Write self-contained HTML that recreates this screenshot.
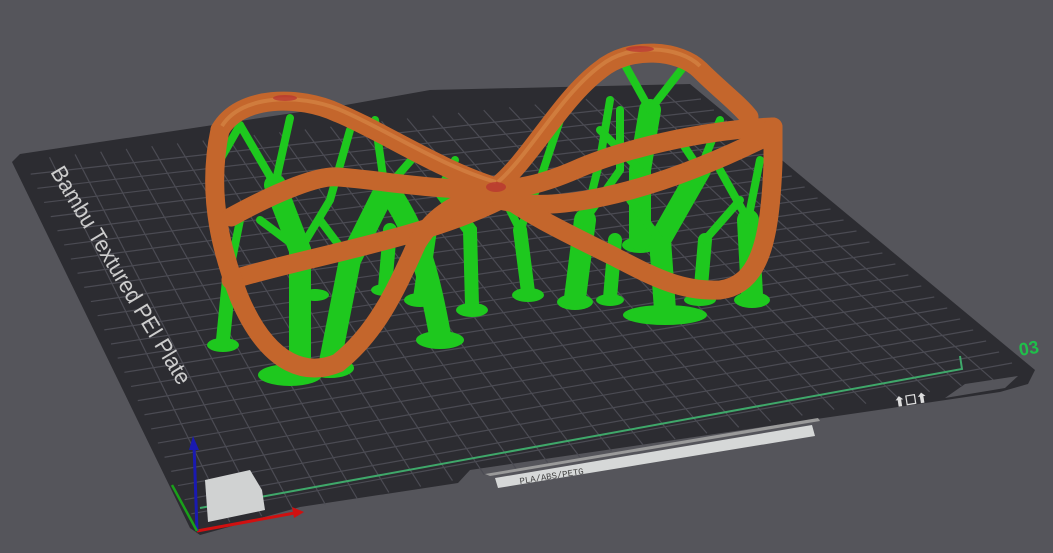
<!DOCTYPE html>
<html><head><meta charset="utf-8"><style>
html,body{margin:0;padding:0;width:1053px;height:553px;overflow:hidden;background:#55555b}
svg{display:block}
</style></head><body>
<svg id="s" width="1053" height="553" viewBox="0 0 1053 553" xmlns="http://www.w3.org/2000/svg">
<polygon points="12,162 20,154 340,106 430,90 690,84 1035,370 1028,384 1000,392 470,470 458,483 300,507 200,535 190,528" fill="#2c2c31"/>
<g id="grid" stroke="#4b4b53" stroke-width="1.2" fill="none"></g>
<polyline points="200,508 962,369 960,356" fill="none" stroke="#3fa86a" stroke-width="2"/>
<polygon points="495,478 498,488 815,436 812,425" fill="#d6d8d8"/>
<polygon points="485,474 490,476 820,421 818,418" fill="#9a9a9a"/>
<text x="895" y="407" font-family="Liberation Sans,sans-serif" font-size="13" font-weight="bold" fill="#ddd" transform="rotate(-9 895 407)">⬆☐⬆</text>
<text x="520" y="484" font-family="Liberation Mono,monospace" font-size="9" fill="#444" transform="rotate(-9 520 484)">PLA/ABS/PETG</text>
<polygon points="945,398 1005,388 1018,376 965,384" fill="#55555b"/>
<text x="50" y="172" font-family="Liberation Sans Narrow,Liberation Sans,sans-serif" font-size="23" fill="#cdcdcd" transform="rotate(59 50 172)" textLength="250" lengthAdjust="spacingAndGlyphs">Bambu Textured PEI Plate</text>
<text x="1020" y="356" font-family="Liberation Sans,sans-serif" font-size="18" font-weight="bold" fill="#1fbf4a" transform="rotate(-10 1020 356)">03</text>
<!-- axes -->
<polygon points="205,480 250,470 262,490 265,510 208,522" fill="#d0d2d2"/>
<line x1="197" y1="531" x2="300" y2="512" stroke="#d01010" stroke-width="3"/>
<polygon points="292,507 304,512 294,518" fill="#d01010"/>
<line x1="197" y1="531" x2="194" y2="445" stroke="#1a1ab0" stroke-width="3"/>
<polygon points="189,450 193,436 199,450" fill="#1a1ab0"/>
<line x1="197" y1="531" x2="172" y2="485" stroke="#1aa01a" stroke-width="2.5"/>
<!-- green supports -->
<g fill="#1ec81e" stroke="none">
<ellipse cx="223" cy="345" rx="16" ry="7"/><ellipse cx="290" cy="375" rx="32" ry="11"/><ellipse cx="330" cy="368" rx="24" ry="10"/>
<ellipse cx="440" cy="340" rx="24" ry="9"/><ellipse cx="385" cy="290" rx="14" ry="6"/><ellipse cx="472" cy="310" rx="16" ry="7"/>
<ellipse cx="528" cy="295" rx="16" ry="7"/><ellipse cx="575" cy="302" rx="18" ry="8"/><ellipse cx="640" cy="245" rx="18" ry="8"/>
<ellipse cx="665" cy="315" rx="42" ry="10"/><ellipse cx="749" cy="255" rx="10" ry="5"/><ellipse cx="752" cy="300" rx="18" ry="8"/>
<ellipse cx="315" cy="295" rx="14" ry="6"/><ellipse cx="420" cy="300" rx="16" ry="7"/><ellipse cx="610" cy="300" rx="14" ry="6"/>
<ellipse cx="700" cy="300" rx="16" ry="6"/>
</g>
<g stroke="#1ec81e" fill="none" stroke-linecap="round">
<g stroke-width="22">
<path d="M300,368 L300,250 L275,185"/><path d="M330,362 L350,260 L385,190"/>
<path d="M440,335 C430,280 420,240 395,200"/><path d="M575,298 L585,220"/><path d="M640,240 L640,170 L650,110"/>
<path d="M665,310 L660,240 L700,170"/><path d="M752,295 L748,220"/>
</g>
<g stroke-width="14">
<path d="M223,340 L230,270"/><path d="M472,305 L470,230 L440,190"/><path d="M528,292 L520,230"/>
<path d="M385,288 L390,230"/><path d="M420,298 L430,230"/><path d="M700,298 L705,240"/><path d="M610,298 L615,240"/>
</g>
<g stroke-width="8">
<path d="M300,250 L330,200 L350,130"/><path d="M275,185 L240,125"/><path d="M275,185 L290,118"/><path d="M385,190 L375,120"/>
<path d="M385,190 L420,150"/><path d="M440,190 L455,160"/><path d="M520,230 L540,180 L560,120"/><path d="M520,230 L500,190"/>
<path d="M585,220 L600,160 L610,100"/><path d="M585,220 L620,170"/><path d="M650,110 L625,65"/><path d="M650,110 L685,65"/>
<path d="M700,170 L720,120"/><path d="M700,170 L680,140"/><path d="M748,220 L760,160"/><path d="M748,220 L720,170"/>
<path d="M230,270 L240,220"/><path d="M620,170 L620,110"/><path d="M640,170 L600,130"/><path d="M240,125 L220,160"/>
<path d="M300,250 L260,220"/><path d="M350,260 L320,220"/><path d="M660,240 L630,200"/><path d="M705,240 L740,200"/>
</g>
</g>
<!-- orange ribbons -->
<g fill="none" stroke="#c4662c" stroke-width="19" stroke-linecap="round">
<path d="M231,280 C300,258 420,240 500,200"/>
<path d="M500,200 C560,215 660,190 770,135"/>
<path d="M220,130 C240,95 300,95 338,113 C380,130 440,170 496,187 C530,160 560,100 600,70 C630,45 680,50 700,70 C720,90 740,105 749,117"/>
<path d="M773,127 C700,130 620,150 575,170 C540,185 520,188 496,190 C470,200 440,205 417,243 C400,280 380,330 338,363 C310,375 270,370 239,297 C225,260 205,200 220,130"/>
<path d="M231,217 C280,190 320,175 338,177 C380,180 430,190 496,190"/>
<path d="M496,190 C520,210 560,230 615,257 C650,275 680,292 720,290 C760,285 770,240 773,163 L773,127"/>
</g>
<g fill="none" stroke="#d98a4a" stroke-width="4" opacity=".6">
<path d="M222,126 C242,94 300,94 338,109 C380,126 440,166 496,182"/>
<path d="M498,182 C530,154 560,96 600,66 C630,42 680,46 700,66"/>
</g>
<g fill="#b83030" opacity=".7"><ellipse cx="496" cy="187" rx="10" ry="5"/><ellipse cx="640" cy="49" rx="14" ry="3"/><ellipse cx="285" cy="98" rx="12" ry="3"/></g>
</svg>
<script>
(function(){
var g=document.getElementById('grid');
var A=[24,160],B=[688,88],C=[198,528],D=[1025,374];
function L(p,q,t){return[p[0]+(q[0]-p[0])*t,p[1]+(q[1]-p[1])*t];}
var N=26,M=26,h='';
for(var i=1;i<N;i++){var t=i/N;var p=L(A,B,t),q=L(C,D,t);h+='<line x1="'+p[0]+'" y1="'+p[1]+'" x2="'+q[0]+'" y2="'+q[1]+'"/>';}
for(var j=1;j<M;j++){var s=j/M;var p=L(A,C,s),q=L(B,D,s);h+='<line x1="'+p[0]+'" y1="'+p[1]+'" x2="'+q[0]+'" y2="'+q[1]+'"/>';}
g.innerHTML=h;
})();
</script>
</body></html>
